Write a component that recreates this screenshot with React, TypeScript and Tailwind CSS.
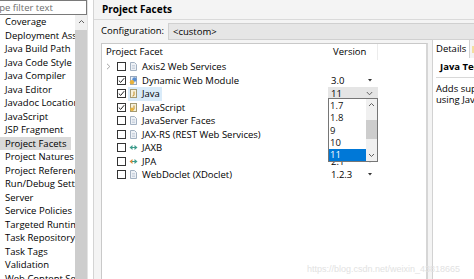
import React from "react"

const FONT = "font-['Open_Sans','Noto_Sans_CJK_SC',sans-serif]"

const leftItems = [
  "Coverage",
  "Deployment Assembly",
  "Java Build Path",
  "Java Code Style",
  "Java Compiler",
  "Java Editor",
  "Javadoc Location",
  "JavaScript",
  "JSP Fragment",
  "Project Facets",
  "Project Natures",
  "Project References",
  "Run/Debug Settings",
  "Server",
  "Service Policies",
  "Targeted Runtimes",
  "Task Repository",
  "Task Tags",
  "Validation",
  "Web Content Settings",
]

type IconKind = "page" | "web" | "java" | "js" | "arrows" | "arrows2"

interface Facet {
  name: string
  checked: boolean
  icon: IconKind
  version?: string
  expand?: boolean
  selected?: boolean
}

// versions of the rows under the open dropdown are hidden by it anyway
const facets: Facet[] = [
  { name: "Axis2 Web Services", checked: false, icon: "page", expand: true },
  { name: "Dynamic Web Module", checked: true, icon: "web", version: "3.0" },
  { name: "Java", checked: true, icon: "java", version: "11", selected: true },
  { name: "JavaScript", checked: true, icon: "js" },
  { name: "JavaServer Faces", checked: false, icon: "page" },
  { name: "JAX-RS (REST Web Services)", checked: false, icon: "page" },
  { name: "JAXB", checked: false, icon: "arrows" },
  { name: "JPA", checked: false, icon: "arrows2", version: "2.1" },
  { name: "WebDoclet (XDoclet)", checked: false, icon: "page", version: "1.2.3" },
]

function FacetIcon({ kind }: { kind: IconKind }) {
  if (kind === "arrows" || kind === "arrows2") {
    const left = kind === "arrows" ? "#3e9c8c" : "#d98a3a"
    return (
      <svg width="9" height="9" viewBox="0 0 9 9">
        <path d="M0.5 4.5 L3.5 2 L3.5 7 Z" fill={left} />
        <path d="M8.5 4.5 L5.5 2 L5.5 7 Z" fill="#3e9c8c" />
        <rect x="3" y="4" width="3" height="1" fill="#3e9c8c" />
      </svg>
    )
  }
  if (kind === "web") {
    return (
      <svg width="9" height="9" viewBox="0 0 9 9">
        <rect x="1.5" y="0.5" width="6" height="8" fill="#eef2f7" stroke="#98a8bc" />
        <circle cx="5.5" cy="3.5" r="2.2" fill="#5b8fd0" />
        <circle cx="3" cy="6.3" r="2.2" fill="#e8b23a" />
      </svg>
    )
  }
  if (kind === "java" || kind === "js") {
    return (
      <svg width="9" height="9" viewBox="0 0 9 9">
        <rect x="1.5" y="0.5" width="6" height="8" fill="#f6f1dc" stroke="#a49a72" />
        <path d="M5 2.5 V6 Q5 7 3.5 7" stroke="#c08a1e" strokeWidth="1" fill="none" />
        {kind === "js" && <circle cx="3" cy="6.3" r="1.8" fill="#e8b23a" />}
      </svg>
    )
  }
  return (
    <svg width="9" height="9" viewBox="0 0 9 9">
      <path d="M1.5 0.5 H5.5 L7.5 2.5 V8.5 H1.5 Z" fill="#edf1f6" stroke="#a3b1c2" />
      <path d="M3 3.5 H6 M3 5 H6 M3 6.5 H6" stroke="#c1ccd9" strokeWidth="0.8" />
    </svg>
  )
}

function CheckBox({ checked }: { checked: boolean }) {
  return (
    <div className="w-[9px] h-[9px] border border-[#333] bg-white flex items-center justify-center shrink-0">
      {checked && (
        <svg width="7" height="7" viewBox="0 0 7 7">
          <path d="M0.8 3.6 L2.7 5.4 L6.2 1.2" stroke="#222" strokeWidth="1" fill="none" />
        </svg>
      )}
    </div>
  )
}

function SmallArrow() {
  return (
    <svg width="4" height="3" viewBox="0 0 4 3" className="mr-[1px]">
      <path d="M0 0 H4 L2 2.5 Z" fill="#333" />
    </svg>
  )
}

function VersionPopup() {
  const items = ["1.7", "1.8", "9", "10", "11"]
  return (
    <div className="absolute left-[226px] top-[54px] w-[50px] h-[64px] border border-[#767676] bg-white flex">
      <div className="flex-1 flex flex-col pt-[1px]">
        {items.map((v) => (
          <div
            key={v}
            className={`h-[12.3px] leading-[12.3px] pl-[1px] text-[9.5px] ${
              v === "11" ? "bg-[#0078d7] text-white" : "text-[#111]"
            }`}
          >
            {v}
          </div>
        ))}
      </div>
      <div className="w-[11px] bg-[#f0f0f0] flex flex-col items-center">
        <svg width="7" height="9" viewBox="0 0 7 9" className="mt-[1px]">
          <path d="M1 6 L3.5 3.5 L6 6" stroke="#606060" strokeWidth="1" fill="none" />
        </svg>
        <div className="mt-[11px] w-[11px] h-[19px] bg-[#cdcdcd]" />
        <svg width="7" height="9" viewBox="0 0 7 9" className="mt-auto mb-[1px]">
          <path d="M1 3 L3.5 5.5 L6 3" stroke="#606060" strokeWidth="1" fill="none" />
        </svg>
      </div>
    </div>
  )
}

export default function App() {
  return (
    <div className={`w-[474px] h-[279px] overflow-hidden flex bg-white text-black ${FONT}`}>
      {/* left preference tree */}
      <div className="w-[88px] shrink-0 flex flex-col border-r border-[#e3e3e3]">
        <div className="h-[15px] border border-[#7a7a7a] border-l-0 overflow-hidden text-[9.5px] leading-[13px] text-[#6d6d6d] whitespace-nowrap">
          <span className="ml-[-9px]">type filter text</span>
        </div>
        <div className="flex flex-1 min-h-0">
          <div className="w-[76px] overflow-hidden">
            {leftItems.map((item) => (
              <div key={item} className="h-[13.5px] leading-[13.5px] text-[9.5px] whitespace-nowrap">
                <span
                  className={`px-[5px] inline-block ${
                    item === "Project Facets" ? "bg-[#d9d9d9]" : ""
                  }`}
                >
                  {item}
                </span>
              </div>
            ))}
          </div>
          <div className="w-[12px] bg-[#f0f0f0] flex flex-col items-center">
            <svg width="7" height="10" viewBox="0 0 7 10" className="mt-[2px]">
              <path d="M1 6 L3.5 3.5 L6 6" stroke="#606060" strokeWidth="1" fill="none" />
            </svg>
            <div className="mt-[3px] w-[12px] flex-1 bg-[#cdcdcd]" />
          </div>
        </div>
      </div>
      <div className="w-[6px] shrink-0 bg-white border-r border-[#d4d4d4]" />

      {/* main page */}
      <div className="flex-1 min-w-0 flex flex-col bg-[#f4f4f4]">
        <div className="h-[20px] shrink-0 border-b border-[#dadada] pl-[8px] text-[10px] font-bold leading-[18px] whitespace-nowrap">
          Project Facets
        </div>
        <div className="h-[23px] shrink-0 flex items-center pl-[7px] text-[9.5px]">
          <span className="w-[67px]">Configuration:</span>
          <div className="flex-1 h-[17px] bg-[#e6e6e6] border-y border-l border-[#d0d0d0] leading-[15px] pl-[4px]">
            &lt;custom&gt;
          </div>
        </div>

        <div className="flex-1 flex pl-[7px] min-h-0">
          {/* facet table */}
          <div className="relative w-[327px] shrink-0 border-l border-t border-r-2 border-[#c9c9c9] border-r-[#d6d6d6] bg-white text-[9.5px]">
            <div className="h-[16px] flex leading-[16px]">
              <div className="w-[226px] pl-[4px]">Project Facet</div>
              <div className="w-[50px] pl-[5px] border-r border-[#ececec]">Version</div>
            </div>
            {facets.map((f) => (
              <div key={f.name} className="h-[13.5px] flex items-center leading-[13.5px] whitespace-nowrap">
                <div className="w-[226px] flex items-center">
                  <div className="w-[15px] flex justify-center">
                    {f.expand && (
                      <svg width="5" height="7" viewBox="0 0 5 7" className="ml-[-3px]">
                        <path d="M1 0.8 L3.8 3.5 L1 6.2" stroke="#9a9a9a" strokeWidth="0.9" fill="none" />
                      </svg>
                    )}
                  </div>
                  <CheckBox checked={f.checked} />
                  <div
                    className={`flex items-center ml-[2px] pl-[1px] pr-[2px] ${
                      f.selected ? "bg-[#d9ebf9]" : ""
                    }`}
                  >
                    <FacetIcon kind={f.icon} />
                    <span className="ml-[4px]">{f.name}</span>
                  </div>
                </div>
                <div
                  className={`w-[50px] h-full flex items-center pl-[3px] pr-[5px] ${
                    f.selected ? "bg-[#e5e5e5]" : ""
                  }`}
                >
                  <span className="flex-1">{f.version}</span>
                  {f.version &&
                    (f.selected ? (
                      <svg width="7" height="5" viewBox="0 0 7 5">
                        <path d="M0.8 1 L3.5 3.8 L6.2 1" stroke="#555" strokeWidth="0.9" fill="none" />
                      </svg>
                    ) : (
                      <SmallArrow />
                    ))}
                </div>
              </div>
            ))}
            <VersionPopup />
            <div className="absolute left-[205px] top-[219px] text-[9px] text-[#e2e2e2] whitespace-nowrap font-['Liberation_Sans',sans-serif]">
              https://blog.csdn.net/weixin_43818665
            </div>
          </div>

          {/* details */}
          <div className="flex-1 ml-[4px] mt-[-4px] flex flex-col min-w-0">
            <div className="flex h-[19px] items-end">
              <div className="h-[19px] px-[3px] border-t border-l border-r border-[#d2d2d2] bg-white text-[9.5px] leading-[17px]">
                Details
              </div>
              <div className="ml-[2px] mb-[5px] w-[6px] h-[7px] bg-[#f3dfa0]" />
            </div>
            <div className="flex-1 bg-white border-l border-[#d2d2d2] pl-[3px] overflow-hidden whitespace-nowrap">
              <div className="flex items-center h-[20px] border-b border-[#d8d8d8] text-[9.5px] font-bold">
                <FacetIcon kind="java" />
                <span className="ml-[4px]">Java Technology</span>
              </div>
              <div className="text-[9.5px] leading-[11px] pt-[5px]">
                Adds support for writing applications
                <br />
                using Java programming language.
              </div>
            </div>
          </div>
        </div>
      </div>
    </div>
  )
}
